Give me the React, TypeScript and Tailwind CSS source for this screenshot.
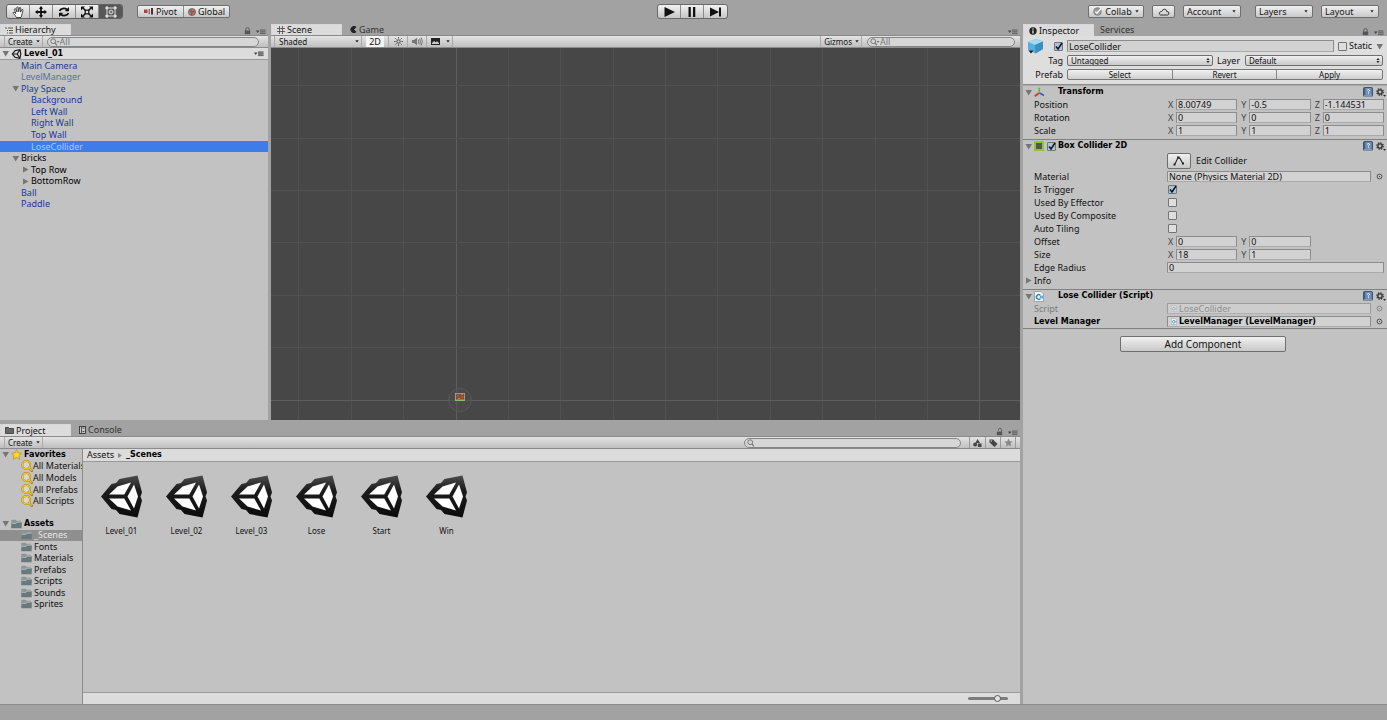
import type { ReactNode } from "react";
import clsx from "clsx";

const HIERARCHY = [
  { name: "Main Camera", depth: 1, tone: "prefab" },
  { name: "LevelManager", depth: 1, tone: "inactive" },
  { name: "Play Space", depth: 1, tone: "prefab", arrow: "open" },
  { name: "Background", depth: 2, tone: "prefab" },
  { name: "Left Wall", depth: 2, tone: "prefab" },
  { name: "Right Wall", depth: 2, tone: "prefab" },
  { name: "Top Wall", depth: 2, tone: "prefab" },
  { name: "LoseCollider", depth: 2, tone: "selected" },
  { name: "Bricks", depth: 1, tone: "plain", arrow: "open" },
  { name: "Top Row", depth: 2, tone: "plain", arrow: "closed" },
  { name: "BottomRow", depth: 2, tone: "plain", arrow: "closed" },
  { name: "Ball", depth: 1, tone: "prefab" },
  { name: "Paddle", depth: 1, tone: "prefab" },
];

const TONES: Record<string, string> = {
  prefab: "text-[#173b93]",
  inactive: "text-[#5a70a5]",
  plain: "text-black",
  selected: "bg-[#3e7de7] text-[#a9c6f6]",
};

const FAVORITES = ["All Materials", "All Models", "All Prefabs", "All Scripts"];
const FOLDERS = ["_Scenes", "Fonts", "Materials", "Prefabs", "Scripts", "Sounds", "Sprites"];
const SCENES = ["Level_01", "Level_02", "Level_03", "Lose", "Start", "Win"];

const GRID_X = [27, 80, 132, 185, 237, 289, 342, 394, 446, 499, 551, 604, 656, 708];
const GRID_Y = [37, 90, 142, 194, 247, 299, 352];

const raised = "border border-[#6f6f6f] bg-linear-to-b from-[#f0f0f0] to-[#c9c9c9]";
const strong = "font-['DejaVu_Sans',Verdana,sans-serif] text-[8px] font-bold text-black";

/* ---------- icons ---------- */

function Arrow({ open, className }: { open?: boolean; className?: string }) {
  return (
    <svg viewBox="0 0 7 7" className={clsx("size-[7px] shrink-0", className)}>
      <path d={open ? "M.5 1h6.500L3.700 6.500z" : "M1 .5v6L6.500 3.500z"} fill="#757575" />
    </svg>
  );
}

function Caret({ className }: { className?: string }) {
  return (
    <svg viewBox="0 0 4 3" className={clsx("h-[3px] w-[4px] shrink-0", className)}>
      <path d="M.3.300h3.400L2 2.600z" fill="#222" />
    </svg>
  );
}

function PanelMenu() {
  return (
    <svg viewBox="0 0 11 6" className="h-[6px] w-[11px] shrink-0">
      <path d="M1 1.500h3.500L2.700 4z" fill="#444" />
      <rect x="5" y=".5" width="5.500" height="4.500" fill="#8f8f8f" />
      <path d="M5 1H10.500M5 2.800H10.500M5 4.600H10.500" stroke="#555" strokeWidth=".7" />
    </svg>
  );
}

function Lock({ open }: { open?: boolean }) {
  return (
    <svg viewBox="0 0 7 8" className="h-[8px] w-[7px] shrink-0">
      <path d={open ? "M2.500 2.500V1.500a1.500 1.300 0 0 1 3 0V4" : "M1.800 4V2.200a1.700 1.600 0 0 1 3.400 0V4"} fill="none" stroke="#555" strokeWidth=".9" />
      <rect x=".8" y="3.600" width="5.400" height="3.600" fill="#555" />
    </svg>
  );
}

function SearchGlyph({ menu }: { menu?: boolean }) {
  return (
    <svg viewBox="0 0 10 8" className="h-[8px] w-[10px] shrink-0">
      <circle cx="3.200" cy="3.200" r="2.400" fill="none" stroke="#777" />
      <path d="M5 5l2 2.300" stroke="#777" strokeWidth="1.200" />
      {menu && <path d="M6.500 3h3L8 5z" fill="#777" />}
    </svg>
  );
}

function UnityCube({ className }: { className?: string }) {
  return (
    <svg viewBox="0 0 42 44" className={className}>
      <defs>
        <linearGradient id="cube" x1="0" y1="0" x2="0" y2="1">
          <stop offset="0" stopColor="#4c4c4c" />
          <stop offset=".35" stopColor="#1c1c1c" />
          <stop offset="1" stopColor="#0c0c0c" />
        </linearGradient>
      </defs>
      <path d="M0 21.500L10.500 9L15 8L18.500 4L36.500.500L41 17.500L39.500 21.500L41 25.500L36.500 42.500L18.500 39L15 35L10.500 34z" fill="url(#cube)" />
      <path d="M8 19.500L16.500 11.500L30 7.500L23.300 19.500z" fill="#fff" />
      <path d="M8 23.500L16.500 31.500L30 35.500L23.300 23.500z" fill="#fff" />
      <path d="M33 9.500L37 21.500L33 33.500L26.500 21.500z" fill="#fff" />
    </svg>
  );
}

function SceneGlyph() {
  return (
    <svg viewBox="0 0 42 44" className="h-[10px] w-[11px] shrink-0">
      <path d="M3 22L14 8L36 3L40 22L36 41L14 36z" fill="none" stroke="#111" strokeWidth="5" />
      <path d="M3 22H24L36 3M24 22L36 41" fill="none" stroke="#111" strokeWidth="5" />
    </svg>
  );
}

function Folder() {
  return (
    <svg viewBox="0 0 11 10" className="h-[10px] w-[11px] shrink-0">
      <path d="M.3 8.500V1.800Q.3.700 1.300.7H4.500l1 1.100H10V8.500z" fill="#8b9496" />
      <path d="M.2 9.300L.8 4.300H5L6 3H10.900L10.600 9.300z" fill="#6a787c" />
      <path d="M.8 4.300H5L6 3.100H10.700" fill="none" stroke="#cdd5d7" strokeWidth=".7" />
    </svg>
  );
}

function FavoriteSearch() {
  return (
    <svg viewBox="0 0 12 12" className="size-[12px] shrink-0">
      <path d="M8 8L10.800 10.800" stroke="#a88412" strokeWidth="2.400" strokeLinecap="round" />
      <circle cx="5.200" cy="5" r="3.900" fill="#d6d6d6" stroke="#a88412" strokeWidth="2" />
      <circle cx="5.200" cy="5" r="3.900" fill="none" stroke="#f2cf2a" strokeWidth="1.100" />
      <path d="M8.200 8.200L10.700 10.700" stroke="#f2cf2a" strokeWidth="1.200" />
    </svg>
  );
}

function Star({ fill, stroke, className }: { fill: string; stroke?: string; className?: string }) {
  return (
    <svg viewBox="0 0 12 12" className={className}>
      <path d="M6 .7L7.600 4.300L11.500 4.700L8.600 7.300L9.400 11.200L6 9.200L2.600 11.200L3.400 7.300L.5 4.700L4.400 4.300z" fill={fill} stroke={stroke} strokeWidth=".7" />
    </svg>
  );
}

function ScriptGlyph({ className }: { className?: string }) {
  return (
    <svg viewBox="0 0 10 11" className={className}>
      <path d="M.5.500H7L9.500 3V10.500H.5z" fill="#f3f7fa" stroke="#8b98a2" strokeWidth=".8" />
      <path d="M6.300 4.300A2.300 2.300 0 1 0 6.300 7.700" fill="none" stroke="#2c86c0" strokeWidth="1.400" />
      <path d="M6.600 4.500v3M8.200 4.500v3M5.800 5.300h3.200M5.800 6.800h3.200" stroke="#2c86c0" strokeWidth=".6" />
    </svg>
  );
}

function Target({ dim }: { dim?: boolean }) {
  return (
    <svg viewBox="0 0 7 7" className={clsx("mr-[1px] ml-auto size-[7px] shrink-0", dim && "opacity-50")}>
      <circle cx="3.500" cy="3.500" r="2.400" fill="none" stroke="#333" strokeWidth=".8" />
      <circle cx="3.500" cy="3.500" r=".6" fill="#333" />
    </svg>
  );
}

function HelpBook() {
  return (
    <svg viewBox="0 0 10 10" className="size-[10px] shrink-0">
      <rect x=".5" y=".5" width="9" height="9" rx="1" fill="#3f5f87" stroke="#31455e" strokeWidth=".8" />
      <rect x="2.200" y="1" width="6.500" height="7" fill="#7290b5" />
      <path d="M1 9L9 9" stroke="#d5dde8" strokeWidth=".9" />
      <path d="M4.200 3.300Q5.500 1.800 6.500 3.200Q6.600 4 5.500 4.700V5.500M5.500 6.300V7.200" fill="none" stroke="#fff" strokeWidth=".9" />
    </svg>
  );
}

function Gear() {
  return (
    <svg viewBox="0 0 10 9" className="h-[9px] w-[10px] shrink-0">
      <circle cx="4" cy="4" r="3.200" fill="none" stroke="#333" strokeWidth="1.300" strokeDasharray="1.400 1.100" />
      <circle cx="4" cy="4" r="2.100" fill="none" stroke="#333" strokeWidth="1.300" />
      <path d="M7 7h3L8.500 8.800z" fill="#222" />
    </svg>
  );
}

/* ---------- toolbar ---------- */

const TOOLS: { label: string; icon: ReactNode }[] = [
  {
    label: "Hand",
    icon: (
      <path
        d="M4.500 11.500Q3.500 9.500 1.200 7.300Q.8 6.200 2.200 6.300L3.800 7.600L2.400 3.300Q2.700 2.300 3.600 2.800L5 6L4.800 1.300Q5.500.5 6.200 1.300L6.700 5.700L7.500 1.600Q8.200 1 8.800 1.900L8.500 6.100L10 3.500Q11 3.200 11 4.200L9.800 9L9 11.500z"
        fill="#fff"
        stroke="#222"
        strokeWidth=".8"
      />
    ),
  },
  {
    label: "Move",
    icon: (
      <path
        d="M6 0L8.200 2.700H6.900V5.100H9.300V3.800L12 6L9.300 8.200V6.900H6.900V9.300H8.200L6 12L3.800 9.300H5.100V6.900H2.700V8.200L0 6L2.700 3.800V5.100H5.100V2.700H3.800z"
        fill="#111"
      />
    ),
  },
  {
    label: "Rotate",
    icon: (
      <>
        <path d="M1.600 5A4.400 3.500 0 0 1 9 3.500M10.400 7A4.400 3.500 0 0 1 3 8.500" fill="none" stroke="#111" strokeWidth="1.800" />
        <path d="M11 1V5.300H6.700zM1 11V6.700H5.300z" fill="#111" />
      </>
    ),
  },
  {
    label: "Scale",
    icon: (
      <>
        <path d="M2 2L10 10M10 2L2 10" stroke="#111" strokeWidth="1.500" />
        <rect x="4.200" y="4.200" width="3.600" height="3.600" fill="#e0e0e0" stroke="#111" strokeWidth="1.200" />
        <path d="M0 .5H4L0 4.500zM12 .5H8L12 4.500zM0 11.500H4L0 7.500zM12 11.500H8L12 7.500z" fill="#111" />
      </>
    ),
  },
  {
    label: "Rect",
    icon: (
      <>
        <path d="M2 0V12M10 0V12M0 2H12M0 10H12" stroke="#ddd" strokeWidth="1" />
        <circle cx="6" cy="6" r="1.900" fill="none" stroke="#ddd" strokeWidth="1" />
        <circle cx="6" cy="6" r=".6" fill="#ddd" />
        <path d="M.8.800h2.400v2.400H.8zM8.800.8h2.400v2.400H8.800zM.8 8.800h2.400v2.400H.8zM8.800 8.800h2.400v2.400H8.800z" fill="#ddd" />
      </>
    ),
  },
];

function TopMenu({ label, className }: { label: string; className: string }) {
  return (
    <button className={clsx(raised, "flex h-[13px] items-center justify-between rounded-[2px] pr-1 pl-[3px]", className)}>
      {label}
      <Caret />
    </button>
  );
}

function Toolbar() {
  return (
    <header className="flex h-[24px] shrink-0 items-center pr-2 pb-[1px] pl-[6px] text-[9px]">
      <div className="flex flex-1 items-center">
        <div className="flex h-[15px] overflow-hidden rounded-[3px] border border-[#5f5f5f]">
          {TOOLS.map((tool, i) => (
            <button
              key={tool.label}
              aria-label={tool.label}
              className={clsx(
                "flex w-[23px] items-center justify-center",
                i < 4 ? "border-r border-[#8a8a8a] bg-linear-to-b from-[#f2f2f2] to-[#c6c6c6]" : "bg-[#575757]"
              )}
            >
              <svg viewBox="0 0 12 12" className="size-[12px]">{tool.icon}</svg>
            </button>
          ))}
        </div>
        <div className="ml-[14px] flex h-[13px] overflow-hidden rounded-[2px] border border-[#6f6f6f] bg-linear-to-b from-[#f0f0f0] to-[#c9c9c9]">
          <button className="flex w-[46px] items-center justify-center gap-[2px] border-r border-[#8a8a8a]">
            <svg viewBox="0 0 10 7" className="h-[7px] w-[10px]">
              <rect x="0" y="1.500" width="3.500" height="3.500" fill="#b0413d" />
              <rect x="4.500" y="1" width="1.500" height="5" fill="#777" />
              <path d="M7 0h2v6.500h-2z" fill="#4b3030" />
            </svg>
            Pivot
          </button>
          <button className="flex w-[45px] items-center justify-center gap-[2px]">
            <svg viewBox="0 0 8 8" className="size-[8px]">
              <circle cx="4" cy="4" r="3.600" fill="#8a8482" stroke="#555" strokeWidth=".6" />
              <path d="M4 4L1.500 1.500M4 4L7 3M4 4L3.500 7.500" stroke="#c13b35" strokeWidth="1.200" />
            </svg>
            Global
          </button>
        </div>
      </div>
      <div className="flex h-[15px] overflow-hidden rounded-[3px] border border-[#6a6a6a] bg-linear-to-b from-[#f2f2f2] to-[#c6c6c6]">
        <button aria-label="Play" className="flex w-[23px] items-center justify-center border-r border-[#8a8a8a]">
          <svg viewBox="0 0 11 10" className="h-[10px] w-[11px]"><path d="M.5 0L11 5L.5 10z" fill="#111" /></svg>
        </button>
        <button aria-label="Pause" className="flex w-[23px] items-center justify-center border-r border-[#8a8a8a]">
          <svg viewBox="0 0 8 10" className="h-[10px] w-[8px]"><path d="M.5 0h2.300v10H.5zM5 0h2.300v10H5z" fill="#111" /></svg>
        </button>
        <button aria-label="Step" className="flex w-[23px] items-center justify-center">
          <svg viewBox="0 0 11 10" className="h-[10px] w-[11px]"><path d="M0 .5L9 5L0 9.500zM9 .5h2v9H9z" fill="#111" /></svg>
        </button>
      </div>
      <div className="flex flex-1 items-center justify-end">
        <button className={clsx(raised, "flex h-[13px] w-[56px] items-center justify-center gap-[3px] rounded-[2px]")}>
          <svg viewBox="0 0 9 9" className="size-[9px]">
            <circle cx="4.500" cy="4.500" r="3.800" fill="#999" stroke="#777" strokeWidth=".8" />
            <path d="M2.300 4.500L4 6.200L8 1.500" fill="none" stroke="#fff" strokeWidth="1.300" />
          </svg>
          Collab
          <Caret />
        </button>
        <button aria-label="Cloud" className={clsx(raised, "ml-2 flex h-[13px] w-[23px] items-center justify-center rounded-[2px]")}>
          <svg viewBox="0 0 12 8" className="h-[8px] w-[12px]">
            <path d="M2.500 7A1.700 1.700 0 0 1 2.500 3.800Q3.500 3.700 4 3.200Q4.800 1 6.700 1.200Q8.600 1.500 8.800 3.600A1.700 1.700 0 0 1 9.500 7z" fill="none" stroke="#222" strokeWidth=".9" />
          </svg>
        </button>
        <TopMenu label="Account" className="ml-2 w-[58px]" />
        <TopMenu label="Layers" className="ml-[14px] w-[58px]" />
        <TopMenu label="Layout" className="ml-2 w-[58px]" />
      </div>
    </header>
  );
}

/* ---------- shared panel parts ---------- */

function Tab({ icon, label, active, className }: { icon?: ReactNode; label: string; active?: boolean; className: string }) {
  return (
    <button
      className={clsx(
        "flex h-full items-center gap-[2px] text-[9px]",
        active ? "rounded-t-[1px] border-x border-t border-[#d8d8d8] bg-[#dcdcdc]" : "text-[#333]",
        className
      )}
    >
      {icon}
      {label}
    </button>
  );
}

const strip = "flex h-[13px] shrink-0 items-center border-t border-b border-t-[#8a8a8a] border-b-[#8c8c8c] bg-linear-to-b from-[#e4e4e4] to-[#bfbfbf] text-[8px]";

function SearchField({ id, placeholder, menu, className }: { id: string; placeholder?: string; menu?: boolean; className: string }) {
  return (
    <label htmlFor={id} className={clsx("flex h-[10px] items-center rounded-full border border-[#858585] bg-[#d6d6d6] pl-[2px]", className)}>
      <SearchGlyph menu={menu} />
      <input id={id} aria-label="Search" placeholder={placeholder} className="h-[8px] w-full min-w-0 bg-transparent text-[9px] leading-[8px] outline-none placeholder:text-[#777]" />
    </label>
  );
}

function CreateMenu() {
  return (
    <button className="ml-1 flex h-full items-center gap-[3px] border-x border-[#aaa] pr-[2px] pl-[3px]">
      Create
      <Caret />
    </button>
  );
}

/* ---------- hierarchy ---------- */

function Hierarchy() {
  return (
    <section className="flex w-[268px] shrink-0 flex-col">
      <div className="flex h-[11px] shrink-0 items-end">
        <Tab
          active
          label="Hierarchy"
          className="w-[71px] pl-1"
          icon={
            <svg viewBox="0 0 8 7" className="h-[7px] w-[8px]">
              <path d="M0 1h2M3 1h5M2 3.500h1M4 3.500h4M2 6h1M4 6h4" stroke="#444" strokeWidth=".9" />
            </svg>
          }
        />
        <div className="ml-auto flex items-end gap-1 pr-[2px]">
          <Lock />
          <PanelMenu />
        </div>
      </div>
      <div className={strip}>
        <CreateMenu />
        <SearchField id="hierarchy-search" placeholder="All" menu className="mr-[9px] ml-[4px] flex-1" />
      </div>
      <div className="flex min-h-0 flex-1 flex-col bg-[#c2c2c2]">
        <div className="flex h-[12px] shrink-0 items-center border-b border-[#9a9a9a] bg-[#dcdcdc] pr-1 pl-[2px]">
          <Arrow open />
          <span className="ml-[2px]"><SceneGlyph /></span>
          <h2 className={clsx(strong, "ml-[2px]")}>Level_01</h2>
          <span className="ml-auto flex"><PanelMenu /></span>
        </div>
        <ul className="grid h-[150px] shrink-0 auto-rows-fr text-[9px] leading-[10px]">
          {HIERARCHY.map((item) => (
            <li
              key={item.name}
              className={clsx("flex items-center", item.depth === 1 ? "pl-[12px]" : "pl-[22px]", TONES[item.tone])}
            >
              {item.arrow ? <Arrow open={item.arrow === "open"} className="mr-[2px]" /> : <span className="w-[9px]" />}
              {item.name}
            </li>
          ))}
        </ul>
      </div>
    </section>
  );
}

/* ---------- scene view ---------- */

function SceneView() {
  return (
    <section className="flex min-w-0 flex-1 flex-col">
      <div className="flex h-[11px] shrink-0 items-end">
        <Tab
          active
          label="Scene"
          className="w-[71px] pl-[5px]"
          icon={
            <svg viewBox="0 0 8 8" className="size-[8px]">
              <path d="M2.500 0V8M5.500 0V8M0 2.500H8M0 5.500H8" stroke="#444" strokeWidth=".8" />
            </svg>
          }
        />
        <Tab
          label="Game"
          className="pl-2"
          icon={
            <svg viewBox="0 0 7 7" className="size-[7px]">
              <path d="M6.500 1A3.500 3.500 0 1 0 6.500 6L4 3.500z" fill="#222" />
            </svg>
          }
        />
        <span className="ml-auto flex pr-[2px]"><PanelMenu /></span>
      </div>
      <div className={strip}>
        <button className="ml-[3px] flex h-full w-[88px] items-center justify-between border-x border-[#aaa] pr-[2px] pl-1">
          Shaded
          <Caret />
        </button>
        <button className="ml-[4px] h-full w-[18px] bg-[#f5f5f5] text-[9px] leading-[11px]">2D</button>
        <button aria-label="Lighting" className="ml-[4px] flex h-full w-[20px] items-center justify-center border-x border-[#aaa]">
          <svg viewBox="0 0 9 9" className="size-[9px]">
            <circle cx="4.500" cy="4.500" r="1.700" fill="none" stroke="#444" />
            <path d="M4.500 0v1.700M4.500 7.300V9M0 4.500h1.700M7.300 4.500H9M1.300 1.300l1.200 1.200M6.500 6.500l1.200 1.200M7.700 1.300L6.500 2.500M2.500 6.500L1.300 7.700" stroke="#444" strokeWidth=".8" />
          </svg>
        </button>
        <button aria-label="Audio" className="flex h-full w-[19px] items-center justify-center border-r border-[#aaa]">
          <svg viewBox="0 0 11 9" className="h-[9px] w-[11px]">
            <path d="M0 3h2L5 .8V8.200L2 6H0z" fill="#777" />
            <path d="M6.200 2.500Q7.200 4.500 6.200 6.500M7.700 1.500Q9.200 4.500 7.700 7.500M9.200.5Q11.500 4.500 9.200 8.500" fill="none" stroke="#666" strokeWidth=".9" />
          </svg>
        </button>
        <button aria-label="Effects" className="flex h-full w-[26px] items-center justify-between border-r border-[#aaa] pr-[2px] pl-[4px]">
          <svg viewBox="0 0 9 7" className="h-[7px] w-[9px]">
            <rect width="9" height="7" fill="#222" />
            <path d="M1 5L3 3L4.500 4.300L6 3.300L8 5V6H1z" fill="#ccc" />
          </svg>
          <Caret />
        </button>
        <button className="ml-auto flex h-full items-center gap-[3px] border-x border-[#aaa] pr-[2px] pl-[3px]">
          Gizmos
          <Caret />
        </button>
        <SearchField id="scene-search" placeholder="All" menu className="mr-[5px] ml-[5px] w-[148px]" />
      </div>
      <div className="min-h-0 flex-1 overflow-hidden bg-[#474747]">
        <svg className="size-full" aria-label="Scene grid">
          {GRID_X.map((x) => (
            <line key={x} x1={x + 0.5} x2={x + 0.5} y1="0" y2="100%" stroke={x === 185 || x === 708 ? "#5e5e5e" : "#515151"} />
          ))}
          {GRID_Y.map((y) => (
            <line key={y} x1="0" x2="100%" y1={y + 0.5} y2={y + 0.5} stroke={y === 352 ? "#5e5e5e" : "#515151"} />
          ))}
          <circle cx="189" cy="352" r="11.500" fill="#4d4d4d" fillOpacity=".5" stroke="#585858" />
          <rect x="184.500" y="345.500" width="9" height="6.500" fill="#83502f" stroke="#aaa" strokeWidth=".8" />
          <path d="M186 347h2v2h-2zM190 348h2v2h-2z" fill="#b5532f" />
          <path d="M187 350h2v1h-2zM190 346h2v1h-2z" fill="#a88a3a" />
          <path d="M184 352.500h10" stroke="#7fc36a" />
        </svg>
      </div>
    </section>
  );
}

/* ---------- project ---------- */

function Project() {
  return (
    <section className="flex h-[280px] shrink-0 flex-col">
      <div className="flex h-[12px] shrink-0 items-end">
        <Tab active label="Project" className="w-[71px] pl-1" icon={<svg viewBox="0 0 9 7" className="h-[7px] w-[9px]"><path d="M.5.500H3.500L4.500 1.500H8.500V6.500H.5z" fill="#666" stroke="#333" strokeWidth=".8" /></svg>} />
        <Tab
          label="Console"
          className="pl-2"
          icon={
            <svg viewBox="0 0 7 8" className="h-[8px] w-[7px]">
              <rect x=".5" y=".5" width="6" height="7" fill="#c8c8c8" stroke="#333" strokeWidth=".9" />
              <path d="M2.500 1v6M3.500 2h2M3.500 5.500h2" stroke="#333" strokeWidth=".8" />
            </svg>
          }
        />
        <div className="ml-auto flex items-end gap-1 pr-[2px]">
          <Lock open />
          <PanelMenu />
        </div>
      </div>
      <div className={strip}>
        <CreateMenu />
        <SearchField id="project-search" className="mr-2 ml-auto w-[217px]" />
        <button aria-label="Search by type" className="flex h-full w-4 items-center justify-center border-l border-[#999]">
          <svg viewBox="0 0 9 8" className="h-[8px] w-[9px]">
            <circle cx="2.200" cy="5.500" r="2" fill="#444" />
            <path d="M4.500 0L7 4H2.500zM5 4.500h3.500V8H5z" fill="#444" />
          </svg>
        </button>
        <button aria-label="Search by label" className="flex h-full w-[15px] items-center justify-center border-l border-[#999]">
          <svg viewBox="0 0 9 8" className="h-[8px] w-[9px]">
            <path d="M.5.500H4L8.500 5L5.500 8L.5 3.500z" fill="#444" />
            <circle cx="2.200" cy="2" r=".7" fill="#ddd" />
          </svg>
        </button>
        <button aria-label="Save search" className="mr-1 flex h-full w-4 items-center justify-center border-x border-[#999]">
          <Star fill="#888" className="size-[9px]" />
        </button>
      </div>
      <div className="flex min-h-0 flex-1">
        <nav className="w-[82px] shrink-0 bg-[#c2c2c2] text-[9px] leading-[10px] whitespace-nowrap">
          <ul className="grid h-[58px] auto-rows-fr">
            <li className={clsx(strong, "flex items-center pl-[2px]")}>
              <Arrow open />
              <Star fill="#fbd82b" stroke="#b58a00" className="mx-[2px] size-[11px] shrink-0" />
              Favorites
            </li>
            {FAVORITES.map((name) => (
              <li key={name} className="flex items-center pl-[21px]">
                <FavoriteSearch />
                {name}
              </li>
            ))}
          </ul>
          <ul className="mt-[11px] grid h-[92px] auto-rows-fr">
            <li className={clsx(strong, "flex items-center gap-[2px] pl-[2px]")}>
              <Arrow open />
              <Folder />
              Assets
            </li>
            {FOLDERS.map((name, i) => (
              <li key={name} className={clsx("flex items-center gap-[2px] pl-[21px]", i === 0 && "bg-[#8f8f8f] text-[#e6e6e6]")}>
                <Folder />
                {name}
              </li>
            ))}
          </ul>
        </nav>
        <div className="flex min-w-0 flex-1 flex-col border-l border-[#8c8c8c] bg-[#c2c2c2]">
          <div className="flex h-[13px] shrink-0 items-center border-b border-[#999] bg-[#dcdcdc] pl-1 text-[9px]">
            <a href="#assets">Assets</a>
            <svg viewBox="0 0 4 5" className="mx-[4px] h-[5px] w-[4px]"><path d="M0 0v5L4 2.500z" fill="#888" /></svg>
            <span className={strong}>_Scenes</span>
          </div>
          <ul className="flex flex-1 pt-[13px] pl-[6px]">
            {SCENES.map((name) => (
              <li key={name} className="flex w-[65px] flex-col items-center text-[8px]">
                <UnityCube className="h-[44px] w-[42px]" />
                <span className="mt-[6px] leading-[12px]">{name}</span>
              </li>
            ))}
          </ul>
          <div className="flex h-[12px] shrink-0 items-center justify-end border-t border-[#999] bg-[#dcdcdc] pr-3">
            <input
              type="range"
              aria-label="Icon size"
              defaultValue={78}
              className="h-[8px] w-[40px] appearance-none bg-transparent [&::-webkit-slider-runnable-track]:h-[3px] [&::-webkit-slider-runnable-track]:rounded-full [&::-webkit-slider-runnable-track]:bg-[#7c7c7c] [&::-webkit-slider-thumb]:-mt-[2px] [&::-webkit-slider-thumb]:size-[7px] [&::-webkit-slider-thumb]:appearance-none [&::-webkit-slider-thumb]:rounded-full [&::-webkit-slider-thumb]:border [&::-webkit-slider-thumb]:border-[#555] [&::-webkit-slider-thumb]:bg-[#e4e4e4]"
            />
          </div>
        </div>
      </div>
    </section>
  );
}

/* ---------- inspector ---------- */

const field = "h-[11px] min-w-0 border border-[#8c8c8c] border-b-[#aaa] bg-[#d2d2d2] px-[1px] leading-[9px] outline-none";

function Check({ id, label, checked }: { id: string; label?: string; checked?: boolean }) {
  return (
    <span className="relative flex size-[9px] shrink-0">
      <input
        id={id}
        type="checkbox"
        aria-label={label}
        defaultChecked={checked}
        className="peer size-[9px] appearance-none rounded-[1px] border border-[#747474] bg-[#dedede] checked:bg-[#a9c4e2]"
      />
      <svg viewBox="0 0 9 9" className="pointer-events-none absolute inset-0 hidden size-[9px] peer-checked:block">
        <path d="M2 4.500L4 7L8 1" fill="none" stroke="#111" strokeWidth="1.500" />
      </svg>
    </span>
  );
}

function Row({ label, htmlFor, bold, dim, children }: { label: string; htmlFor?: string; bold?: boolean; dim?: boolean; children: ReactNode }) {
  return (
    <div className={clsx("flex h-[13px] items-center pr-[3px] pl-[11px]", bold && strong, dim && "text-[#7b7b7b]")}>
      <label htmlFor={htmlFor} className="w-[133px] shrink-0">{label}</label>
      {children}
    </div>
  );
}

function Vector({ name, values }: { name: string; values: string[] }) {
  return (
    <Row label={name} htmlFor={`${name}-X`}>
      <div className="grid flex-1 grid-cols-3 gap-[3px]">
        {values.map((value, i) => (
          <div key={i} className="flex items-center">
            <label htmlFor={`${name}-${"XYZ"[i]}`} className="w-[9px] shrink-0 pl-[1px] text-[#444]">{"XYZ"[i]}</label>
            <input id={`${name}-${"XYZ"[i]}`} defaultValue={value} className={clsx(field, "flex-1")} />
          </div>
        ))}
      </div>
    </Row>
  );
}

function ComponentHeader({ icon, title, children }: { icon: ReactNode; title: string; children?: ReactNode }) {
  return (
    <div className="flex h-[12px] items-center pr-[1px] pl-[2px]">
      <Arrow open />
      <span className="ml-[1px] flex w-[12px] justify-center">{icon}</span>
      <span className="flex w-[13px] justify-center">{children}</span>
      <h3 className={clsx(strong, "flex-1")}>{title}</h3>
      <HelpBook />
      <span className="ml-[3px] flex"><Gear /></span>
    </div>
  );
}

function Popup({ id, value, className }: { id: string; value: string; className: string }) {
  return (
    <span className={clsx("relative flex", className)}>
      <select id={id} className={clsx(raised, "h-[11px] w-full appearance-none rounded-[2px] px-[3px] text-[8px] leading-[9px]")}>
        <option>{value}</option>
      </select>
      <svg viewBox="0 0 4 6" className="pointer-events-none absolute top-[3px] right-[3px] h-[5px] w-[4px]">
        <path d="M0 2.500h4L2 0zM0 3.500h4L2 6z" fill="#222" />
      </svg>
    </span>
  );
}

function Inspector() {
  return (
    <aside className="flex w-[364px] shrink-0 flex-col text-[9px]">
      <div className="flex h-[12px] shrink-0 items-end">
        <Tab
          active
          label="Inspector"
          className="w-[71px] pl-[5px]"
          icon={
            <svg viewBox="0 0 8 8" className="size-[8px]">
              <circle cx="4" cy="4" r="3.700" fill="#222" />
              <path d="M4 1.500v1.300M4 3.500v3" stroke="#fff" strokeWidth="1.200" />
            </svg>
          }
        />
        <Tab label="Services" className="pl-[6px]" />
        <div className="ml-auto flex items-end gap-1 pr-[3px]">
          <Lock />
          <PanelMenu />
        </div>
      </div>
      <div className="flex min-h-0 flex-1 flex-col bg-[#c2c2c2]">
        <div className="flex h-[49px] shrink-0 flex-col gap-[3px] border-b border-[#8c8c8c] bg-[#dedede] pt-[4px] pr-[4px]">
          <div className="flex h-[12px] items-center pl-[4px]">
            <svg viewBox="0 0 17 16" className="h-[16px] w-[17px] shrink-0">
              <path d="M1 4L9 1L16 3.500V11L8.500 15.500L1 12z" fill="#58aedd" />
              <path d="M1 4L9 1L16 3.500L8 7z" fill="#a3d8f2" />
              <path d="M8 7L16 3.500V11L8.500 15.500z" fill="#3b8dc2" />
              <path d="M1.500 12.500h5L4 15.500z" fill="#222" />
            </svg>
            <span className="ml-[10px] flex"><Check id="active" label="Active" checked /></span>
            <input aria-label="Name" defaultValue="LoseCollider" className={clsx(field, "ml-[4px] h-[12px] flex-1")} />
            <span className="ml-[4px] flex"><Check id="static" /></span>
            <label htmlFor="static" className="ml-[2px] w-[26px]">Static</label>
            <Arrow open className="ml-[1px]" />
          </div>
          <div className="flex h-[11px] items-center">
            <label htmlFor="tag" className="w-[40px] text-right">Tag</label>
            <Popup id="tag" value="Untagged" className="ml-[4px] w-[146px]" />
            <label htmlFor="layer" className="ml-[4px] w-[28px]">Layer</label>
            <Popup id="layer" value="Default" className="flex-1" />
          </div>
          <div className="flex h-[11px] items-center">
            <span className="w-[40px] text-right">Prefab</span>
            <div className="ml-[4px] grid h-[11px] flex-1 grid-cols-3 divide-x divide-[#888] rounded-[2px] border border-[#777] bg-linear-to-b from-[#f0f0f0] to-[#cfcfcf] text-[8px] leading-[9px]">
              <button>Select</button>
              <button>Revert</button>
              <button>Apply</button>
            </div>
          </div>
        </div>

        <section className="shrink-0 border-t border-b border-t-[#aaa] border-b-[#808080] pb-[2px]">
          <ComponentHeader
            title="Transform"
            icon={
              <svg viewBox="0 0 11 10" className="h-[10px] w-[11px]">
                <path d="M5 6L.8 9.200" stroke="#d3352b" strokeWidth="1.800" />
                <path d="M5.500 6L10 8.500" stroke="#2f62c6" strokeWidth="1.800" />
                <path d="M5.300 6V.8" stroke="#6cb52d" strokeWidth="1.600" />
              </svg>
            }
          />
          <Vector name="Position" values={["8.00749", "-0.5", "-1.144531"]} />
          <Vector name="Rotation" values={["0", "0", "0"]} />
          <Vector name="Scale" values={["1", "1", "1"]} />
        </section>

        <section className="shrink-0 border-b border-[#808080] pb-[2px]">
          <ComponentHeader
            title="Box Collider 2D"
            icon={<span className="size-[10px] border-[2px] border-[#8fc53a] bg-[#555]" />}
          >
            <Check id="collider-enabled" label="Enabled" checked />
          </ComponentHeader>
          <div className="flex h-[18px] items-center pl-[144px]">
            <button aria-label="Edit Collider" className={clsx(raised, "flex h-[16px] w-[24px] items-center justify-center rounded-[2px]")}>
              <svg viewBox="0 0 12 10" className="h-[10px] w-[12px]">
                <path d="M2 8L5 1.500L7 2.500L10 8" fill="none" stroke="#222" strokeWidth="1.100" />
                <path d="M4 .5h2.500v2H4zM.5 7.500h2v2h-2zM9 6.500h2v2H9z" fill="#222" />
              </svg>
            </button>
            <span className="ml-[5px]">Edit Collider</span>
          </div>
          <Row label="Material" htmlFor="material">
            <input id="material" defaultValue="None (Physics Material 2D)" className={clsx(field, "w-[204px]")} />
            <Target />
          </Row>
          <Row label="Is Trigger" htmlFor="trigger"><span className="pl-[1px]"><Check id="trigger" checked /></span></Row>
          <Row label="Used By Effector" htmlFor="effector"><span className="pl-[1px]"><Check id="effector" /></span></Row>
          <Row label="Used By Composite" htmlFor="composite"><span className="pl-[1px]"><Check id="composite" /></span></Row>
          <Row label="Auto Tiling" htmlFor="tiling"><span className="pl-[1px]"><Check id="tiling" /></span></Row>
          <Vector name="Offset" values={["0", "0"]} />
          <Vector name="Size" values={["18", "1"]} />
          <Row label="Edge Radius" htmlFor="radius">
            <input id="radius" defaultValue="0" className={clsx(field, "flex-1")} />
          </Row>
          <div className="flex h-[13px] items-center gap-[2px] pl-[2px]">
            <Arrow />
            Info
          </div>
        </section>

        <section className="shrink-0 border-b border-[#808080]">
          <ComponentHeader title="Lose Collider (Script)" icon={<ScriptGlyph className="h-[11px] w-[10px]" />} />
          <Row label="Script" dim>
            <div className={clsx(field, "flex w-[204px] items-center gap-[2px] opacity-70")}>
              <ScriptGlyph className="ml-[2px] h-[7px] w-[6px] opacity-60" />
              LoseCollider
            </div>
            <Target dim />
          </Row>
          <Row label="Level Manager" bold>
            <div className={clsx(field, "flex w-[204px] items-center gap-[2px]")}>
              <ScriptGlyph className="ml-[2px] h-[7px] w-[6px]" />
              LevelManager (LevelManager)
            </div>
            <Target />
          </Row>
        </section>

        <div className="flex shrink-0 justify-center pt-[7px] pr-[4px]">
          <button className={clsx(raised, "h-[16px] w-[166px] rounded-[2px] text-[10px] leading-[14px]")}>
            Add Component
          </button>
        </div>
      </div>
    </aside>
  );
}

export default function App() {
  return (
    <div className="flex h-screen flex-col bg-[#a2a2a2] font-['Noto_Sans','DejaVu_Sans',sans-serif] text-[9px] text-[#111]">
      <Toolbar />
      <main className="flex min-h-0 flex-1 gap-[3px]">
        <div className="flex min-w-0 flex-1 flex-col gap-1">
          <div className="flex min-h-0 flex-1 gap-[3px]">
            <Hierarchy />
            <SceneView />
          </div>
          <Project />
        </div>
        <Inspector />
      </main>
      <footer className="h-4 shrink-0 border-t border-[#8c8c8c]" />
    </div>
  );
}
